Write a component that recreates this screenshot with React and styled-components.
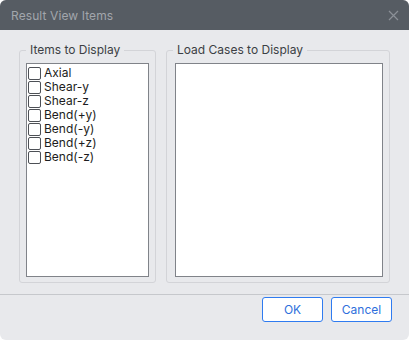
import React from "react";
import styled, { createGlobalStyle } from "styled-components";

const GlobalStyle = createGlobalStyle`
  html, body {
    margin: 0;
    padding: 0;
    background: #ffffff;
  }
  body {
    font-family: Inter, "Noto Sans", "Liberation Sans", sans-serif;
    font-size: 12px;
  }
`;

const items = [
  "Axial",
  "Shear-y",
  "Shear-z",
  "Bend(+y)",
  "Bend(-y)",
  "Bend(+z)",
  "Bend(-z)",
];

const App = () => {
  return (
    <>
      <GlobalStyle />
      <Window>
        <TitleBar>
          <Title>Result View Items</Title>
          <CloseButton aria-label="Close">
            <svg width="11" height="11" viewBox="0 0 11 11">
              <path
                d="M1 1 L10 10 M10 1 L1 10"
                stroke="#8b9097"
                strokeWidth="1.2"
                fill="none"
              />
            </svg>
          </CloseButton>
        </TitleBar>

        <Content>
          <GroupBox $padLeft={6}>
            <Legend>Items to Display</Legend>
            <ListBox>
              {items.map((item) => (
                <CheckRow key={item}>
                  <CheckBox />
                  <span>{item}</span>
                </CheckRow>
              ))}
            </ListBox>
          </GroupBox>

          <GroupBox $padLeft={8}>
            <Legend>Load Cases to Display</Legend>
            <ListBox />
          </GroupBox>
        </Content>

        <Footer>
          <Button>OK</Button>
          <Button>Cancel</Button>
        </Footer>
      </Window>
    </>
  );
};

//Styling

const Window = styled.div`
  width: 409px;
  height: 340px;
  display: flex;
  flex-direction: column;
  background: #e8e9ec;
  border-radius: 6px;
  overflow: hidden;
`;

const TitleBar = styled.div`
  height: 30px;
  flex: none;
  display: flex;
  align-items: center;
  justify-content: space-between;
  background: #565c63;
  padding: 0 9px 0 11px;
`;

const Title = styled.div`
  color: #a2a6ac;
  font-size: 12px;
  letter-spacing: 0.1px;
`;

const CloseButton = styled.div`
  width: 14px;
  height: 14px;
  display: flex;
  align-items: center;
  justify-content: center;
`;

const Content = styled.div`
  display: grid;
  grid-template-columns: 137px 1fr;
  column-gap: 10px;
  padding: 20px 19px 0 19px;
  height: 233px;
  flex: none;
`;

const GroupBox = styled.div`
  position: relative;
  display: flex;
  border: 1px solid #d3d4d8;
  border-radius: 3px;
  padding: 12px 6px 5px ${(p) => p.$padLeft}px;
`;

const Legend = styled.div`
  position: absolute;
  top: -9px;
  left: 6px;
  padding: 0 4px;
  background: #e8e9ec;
  color: #3c3f44;
  font-size: 12px;
  line-height: 16px;
`;

const ListBox = styled.div`
  flex: 1;
  background: #ffffff;
  border: 1px solid #808389;
  padding: 2px 0 0 1px;
  display: flex;
  flex-direction: column;
`;

const CheckRow = styled.label`
  display: flex;
  align-items: center;
  gap: 3px;
  height: 14px;
  color: #1c1d20;
  font-size: 12px;
  line-height: 14px;
`;

const CheckBox = styled.span`
  width: 11px;
  height: 11px;
  border: 1px solid #4d5056;
  border-radius: 2px;
  background: #ffffff;
  flex: none;
`;

const Footer = styled.div`
  margin-top: 11px;
  border-top: 1px solid #c6c8cc;
  display: flex;
  justify-content: flex-end;
  gap: 8px;
  padding: 2px 17px 0 0;
`;

const Button = styled.button`
  width: 61px;
  height: 25px;
  background: #ffffff;
  border: 1px solid #2f7bf0;
  border-radius: 3px;
  color: #2e6fdc;
  font-family: Inter, "Noto Sans", "Liberation Sans", sans-serif;
  font-size: 12px;
  padding: 0;
  cursor: pointer;
`;

export default App;
